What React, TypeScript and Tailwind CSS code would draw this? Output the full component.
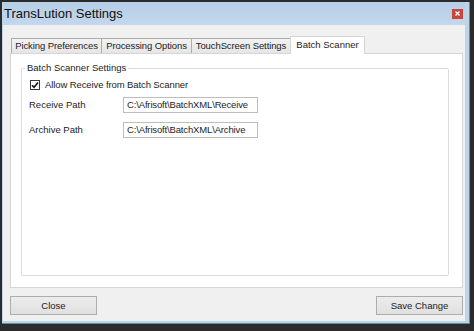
import React from 'react'

const tabs = [
  { label: 'Picking Preferences', width: 'w-[91px]' },
  { label: 'Processing Options', width: 'w-[91px]' },
  { label: 'TouchScreen Settings', width: 'w-[100px]' },
]

export default function App() {
  return (
    <div className="w-[474px] h-[331px] bg-[#2b2b2e] pl-[2px] pr-[4px] pt-[2px] pb-[7px] flex font-['Liberation_Sans',Arial,sans-serif] text-[#1c1c1c]">
      {/* Window frame */}
      <div className="flex-1 flex flex-col bg-[#bed4ea] pl-[1px] pr-[4px] pb-[2px] border-r border-b border-[#5b9196]">
        {/* Title bar */}
        <div className="h-[23px] flex items-center justify-between pl-[1px] pr-[2px] bg-gradient-to-b from-[#b6cde6] to-[#c3d8ed]">
          <span className="text-[13px] leading-none text-[#111]">TransLution Settings</span>
          <div className="w-[11px] h-[10px] bg-[#c9443c] flex items-center justify-center">
            <svg width="5" height="5" viewBox="0 0 5 5">
              <path d="M0.5 0.5L4.5 4.5M4.5 0.5L0.5 4.5" stroke="#fff" strokeWidth="1.3" />
            </svg>
          </div>
        </div>

        {/* Client area */}
        <div className="flex-1 flex flex-col bg-[#f0f0f0] pl-[7px] pr-[2px] pt-[11px]">
          {/* Tab strip */}
          <div className="flex items-end h-[17px] pl-[1px] text-[9.5px]">
            {tabs.map((t, i) => (
              <div
                key={t.label}
                className={`${t.width} ${i > 0 ? '-ml-px' : ''} h-[16px] -mb-px border border-[#acacac] bg-gradient-to-b from-[#f2f2f2] to-[#e6e6e6] flex items-center justify-center leading-none tracking-[-0.1px]`}
              >
                {t.label}
              </div>
            ))}
            <div className="relative z-10 -ml-px w-[75px] h-[18px] -mb-px border border-b-0 border-[#d6d6d6] bg-white flex items-start justify-center pt-[3px] leading-none">
              Batch Scanner
            </div>
          </div>

          {/* Tab panel */}
          <div className="h-[235px] border border-[#d6d6d6] bg-white pl-[10px] pr-[13px] pt-[8px] text-[9.5px]">
            <fieldset className="h-[214px] border border-[#dcdcdc] rounded-[2px]">
              <legend className="ml-[3px] px-[2px] leading-[12px]">Batch Scanner Settings</legend>

              <div className="flex items-center h-[12px] mt-[5px] pl-[8px]">
                <span className="w-[10px] h-[10px] border border-[#3a3a3a] bg-white flex items-center justify-center">
                  <svg width="8" height="8" viewBox="0 0 8 8">
                    <path d="M1 4.2L3 6.2L7 1.5" fill="none" stroke="#111" strokeWidth="1.6" />
                  </svg>
                </span>
                <span className="ml-[5px] leading-none tracking-[-0.1px]">Allow Receive from Batch Scanner</span>
              </div>

              <div className="flex items-center mt-[6px] pl-[7px]">
                <span className="w-[94px] leading-none">Receive Path</span>
                <div className="w-[135px] h-[16px] border border-[#bdbdbd] bg-white pl-[3px] flex items-center leading-none tracking-[-0.15px]">
                  C:\Afrisoft\BatchXML\Receive
                </div>
              </div>

              <div className="flex items-center mt-[9px] pl-[7px]">
                <span className="w-[94px] leading-none">Archive Path</span>
                <div className="w-[135px] h-[16px] border border-[#bdbdbd] bg-white pl-[3px] flex items-center leading-none tracking-[-0.15px]">
                  C:\Afrisoft\BatchXML\Archive
                </div>
              </div>
            </fieldset>
          </div>

          {/* Buttons */}
          <div className="flex justify-between mt-[8px] text-[9.5px]">
            <button className="w-[87px] h-[19px] border border-[#adadad] bg-gradient-to-b from-[#ececec] to-[#e0e0e0] leading-none">
              Close
            </button>
            <button className="w-[87px] h-[19px] border border-[#adadad] bg-gradient-to-b from-[#ececec] to-[#e0e0e0] leading-none">
              Save Change
            </button>
          </div>
        </div>
      </div>
    </div>
  )
}
